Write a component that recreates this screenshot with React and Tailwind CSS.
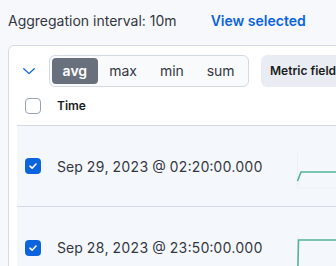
import React from "react";

function Check({ checked }) {
  if (checked) {
    return (
      <div className="w-4 h-4 rounded-[4px] bg-[#0b64dd] flex items-center justify-center">
        <svg width="10" height="10" viewBox="0 0 10 10" fill="none">
          <path d="M2 5.2 L4.1 7.2 L8 3" stroke="white" strokeWidth="1.6" strokeLinecap="round" strokeLinejoin="round" />
        </svg>
      </div>
    );
  }
  return <div className="w-4 h-4 rounded-[4px] border border-[#98a2b3] bg-white" />;
}

function Row({ date, chart, last }) {
  return (
    <div className={`flex h-[81px] bg-[#f4f8fc] ${last ? "" : "border-b border-[#d3dae6]"}`}>
      <div className="w-8 flex items-center justify-center">
        <Check checked />
      </div>
      <div className="w-[240px] pl-2 flex items-center text-[14px] text-[#343741] tabular-nums">{date}</div>
      <div className="flex-1 relative">{chart}</div>
    </div>
  );
}

export default function App() {
  return (
    <div className="w-[336px] h-[266px] overflow-hidden bg-[#f7f8fc]" style={{ fontFamily: "Inter, 'Liberation Sans', sans-serif" }}>
      <div className="h-[45px] pl-2 flex items-center text-[14px] pb-[5px]">
        <span className="text-[#343741]">Aggregation interval: 10m</span>
        <span className="ml-[34px] text-[#0b64dd] font-semibold">View selected</span>
      </div>
      <div className="ml-2 w-[420px] h-[260px] bg-white border border-[#d3dae6] rounded-[6px] px-2">
        <div className="flex items-center pt-2 h-[41px]">
          <div className="w-6 flex items-center justify-center">
            <svg width="14" height="14" viewBox="0 0 16 16" fill="none">
              <path d="M2 5.5 L8 11 L14 5.5" stroke="#0b64dd" strokeWidth="1.5" strokeLinecap="round" strokeLinejoin="round" />
            </svg>
          </div>
          <div className="ml-2 w-[200px] h-8 border border-[#d3dae6] rounded-[6px] bg-[#f9fafc] p-[2px] flex items-center text-[14px] text-[#343741]">
            <div className="h-[26px] w-[46px] rounded-[4px] bg-[#69707d] text-white font-semibold flex items-center justify-center">avg</div>
            <div className="w-[51px] text-center">max</div>
            <div className="w-[47px] text-center">min</div>
            <div className="w-[51px] text-center">sum</div>
          </div>
          <div className="ml-3 h-8 pl-[9px] pr-3 rounded-[6px] bg-[#e9edf3] flex items-center text-[12px] font-semibold text-[#1a1c21] whitespace-nowrap">Metric field</div>
        </div>
        <div className="flex h-[39px] border-b border-[#d3dae6] items-center">
          <div className="w-8 flex items-center justify-center">
            <Check checked={false} />
          </div>
          <div className="pl-2 text-[12px] font-semibold text-[#1a1c21]">Time</div>
        </div>
        <Row
          date="Sep 29, 2023 @ 02:20:00.000"
          chart={
            <svg className="absolute left-0 top-0" width="60" height="80" viewBox="0 0 60 80" fill="none">
              <path d="M8.5 27 V62 H60" stroke="#eef0f3" strokeWidth="1" />
              <path d="M8.5 55 L12 46 H60" stroke="#54b399" strokeWidth="1.6" />
            </svg>
          }
        />
        <Row
          last
          date="Sep 28, 2023 @ 23:50:00.000"
          chart={
            <svg className="absolute left-0 top-0" width="60" height="80" viewBox="0 0 60 80" fill="none">
              <path d="M8.5 28 V80" stroke="#eef0f3" strokeWidth="1" />
              <path d="M8.5 80 L9.5 33 H60" stroke="#54b399" strokeWidth="1.6" />
            </svg>
          }
        />
      </div>
    </div>
  );
}
